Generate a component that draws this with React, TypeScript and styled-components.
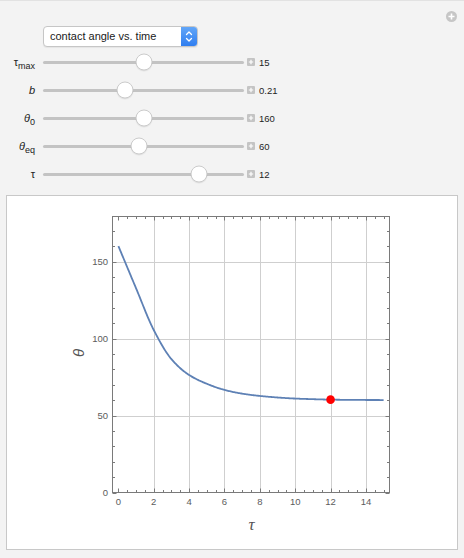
import React, { FC } from 'react';
import styled, { createGlobalStyle } from 'styled-components';

const GlobalStyle = createGlobalStyle`
  body {
    margin: 0;
    background: #f3f3f3;
    font-family: "Liberation Sans", Arial, sans-serif;
  }
`;

const Page = styled.div`
  position: relative;
  width: 464px;
  height: 558px;
  box-sizing: border-box;
  padding-top: 25px;
  background: #f3f3f3;
  border-top: 1px solid #e2e2e2;
  overflow: hidden;
`;

const CornerButton = styled.div`
  position: absolute;
  top: 10px;
  right: 7px;
  width: 11px;
  height: 11px;
  display: flex;
`;

const MenuRow = styled.div`
  padding-left: 43px;
  display: flex;
`;

const Popup = styled.div`
  display: flex;
  width: 155px;
  height: 21px;
  box-sizing: border-box;
  border: 1px solid #c6c6c6;
  border-radius: 4px;
  background: #fff;
  box-shadow: 0 1px 1px rgba(0, 0, 0, 0.06);
  overflow: hidden;
`;

const PopupText = styled.span`
  flex: 1;
  padding-left: 6px;
  font-size: 11px;
  line-height: 19px;
  color: #1a1a1a;
`;

const Stepper = styled.span`
  width: 16px;
  display: flex;
  align-items: center;
  justify-content: center;
  background: linear-gradient(#62a6f8, #2f7ef0);
`;

const Controls = styled.div`
  margin-top: 1px;
  display: flex;
  flex-direction: column;
`;

const Row = styled.div`
  display: flex;
  align-items: center;
  height: 28px;
`;

const Label = styled.div`
  width: 35px;
  text-align: right;
  font-size: 11px;
  color: #222;
  white-space: nowrap;
`;

const Sym = styled.span<{ $italic?: boolean }>`
  font-style: ${(p) => (p.$italic ? 'italic' : 'normal')};
`;

const Sub = styled.sub`
  font-size: 9px;
  vertical-align: -3px;
  line-height: 0;
`;

const Track = styled.div`
  position: relative;
  margin-left: 8px;
  width: 201px;
  height: 3px;
  border-radius: 2px;
  background: #c3c3c3;
`;

const Thumb = styled.div`
  position: absolute;
  top: 50%;
  width: 17px;
  height: 17px;
  box-sizing: border-box;
  border-radius: 50%;
  border: 1px solid #cbcbcb;
  background: #fff;
  box-shadow: 0 1px 1px rgba(0, 0, 0, 0.08);
  transform: translate(-50%, -50%);
`;

const PlusBox = styled.span`
  margin-left: 3px;
  width: 8px;
  height: 8px;
  display: flex;
`;

const Value = styled.span`
  margin-left: 4px;
  font-size: 9.5px;
  color: #1e1e1e;
`;

const Panel = styled.div`
  margin: 7px 0 0 6px;
  width: 452px;
  height: 355px;
  box-sizing: border-box;
  border: 1px solid #c8c8c8;
  background: #fff;
`;

const PlusSquare = () => (
  <svg width="8" height="8" viewBox="0 0 8 8">
    <rect width="8" height="8" rx="1" fill="#c4c4c4" />
    <path d="M4 1.8v4.4M1.8 4h4.4" stroke="#fff" strokeWidth="1.2" />
  </svg>
);

const Slider: FC<{
  label: React.ReactNode;
  value: string;
  fraction: number;
}> = ({ label, value, fraction }) => (
  <Row>
    <Label>{label}</Label>
    <Track>
      <Thumb style={{ left: 8.5 + fraction * 184 }} />
    </Track>
    <PlusBox>
      <PlusSquare />
    </PlusBox>
    <Value>{value}</Value>
  </Row>
);

// contact angle samples, interpolated with a monotone cubic
const samples: [number, number][] = [
  [0, 160], [1, 132.6], [2, 105.5], [3, 86.6], [4, 76.3], [5, 70.6],
  [6, 66.6], [7, 64.2], [8, 62.7], [9, 61.7], [10, 61.0], [11, 60.6],
  [12, 60.3], [13, 60.15], [14, 60.08], [15, 60.04],
];

const interp = (t: number) => {
  const n = samples.length;
  const d: number[] = [];
  for (let i = 0; i < n - 1; i++) d.push(samples[i + 1][1] - samples[i][1]);
  const m: number[] = samples.map((_, i) => {
    if (i === 0) return d[0];
    if (i === n - 1) return d[n - 2];
    if (d[i - 1] * d[i] <= 0) return 0;
    return (2 * d[i - 1] * d[i]) / (d[i - 1] + d[i]);
  });
  const i = Math.min(n - 2, Math.floor(t));
  const s = t - i;
  const y0 = samples[i][1];
  const y1 = samples[i + 1][1];
  const h00 = 2 * s ** 3 - 3 * s ** 2 + 1;
  const h10 = s ** 3 - 2 * s ** 2 + s;
  const h01 = -2 * s ** 3 + 3 * s ** 2;
  const h11 = s ** 3 - s ** 2;
  return h00 * y0 + h10 * m[i] + h01 * y1 + h11 * m[i + 1];
};

const left = 105.5;
const right = 382.5;
const top = 20.5;
const bottom = 296.5;
const X = (t: number) => left + (t + 1 / 3) * ((right - left) / (15 + 2 / 3));
const Y = (v: number) => bottom - v * 1.54;

const Plot = () => {
  const pts: string[] = [];
  for (let k = 0; k <= 300; k++) {
    const t = (15 * k) / 300;
    pts.push(`${X(t).toFixed(2)},${Y(interp(t)).toFixed(2)}`);
  }

  const xTicks: React.ReactNode[] = [];
  for (let k = 0; k <= 30; k++) {
    const t = k / 2;
    const major = k % 4 === 0;
    const len = major ? 4 : 2.5;
    const x = Math.round(X(t)) + 0.5;
    xTicks.push(
      <g key={`x${k}`}>
        <line x1={x} x2={x} y1={bottom} y2={bottom - len} />
        <line x1={x} x2={x} y1={top} y2={top + len} />
      </g>
    );
  }
  const yTicks: React.ReactNode[] = [];
  for (let v = 0; v <= 170; v += 10) {
    const major = v % 50 === 0;
    const len = major ? 4 : 2.5;
    const y = Math.round(Y(v)) + 0.5;
    yTicks.push(
      <g key={`y${v}`}>
        <line x1={left} x2={left + len} y1={y} y2={y} />
        <line x1={right} x2={right - len} y1={y} y2={y} />
      </g>
    );
  }

  return (
    <svg width="450" height="353" viewBox="0 0 450 353" style={{ display: 'block' }}>
      <g stroke="#cfcfcf" strokeWidth="1">
        {[2, 4, 6, 8, 10, 12, 14].map((t) => {
          const x = Math.round(X(t)) + 0.5;
          return <line key={t} x1={x} x2={x} y1={top} y2={bottom} />;
        })}
        {[50, 100, 150].map((v) => {
          const y = Math.round(Y(v)) + 0.5;
          return <line key={v} x1={left} x2={right} y1={y} y2={y} />;
        })}
      </g>
      <g stroke="#7a7a7a" strokeWidth="1">
        {xTicks}
        {yTicks}
      </g>
      <rect
        x={left}
        y={top}
        width={right - left}
        height={bottom - top}
        fill="none"
        stroke="#7a7a7a"
      />
      <polyline points={pts.join(' ')} fill="none" stroke="#5e81b5" strokeWidth="1.8" />
      <circle cx={X(12)} cy={Y(interp(12))} r="4.3" fill="#ff0000" />
      <g fill="#5c5c5c" fontSize="9.5" fontFamily="Liberation Sans, Arial, sans-serif">
        {[0, 2, 4, 6, 8, 10, 12, 14].map((t) => (
          <text key={t} x={X(t)} y={309} textAnchor="middle">
            {t}
          </text>
        ))}
        {[0, 50, 100, 150].map((v) => (
          <text key={v} x={101} y={Y(v) + 3.3} textAnchor="end">
            {v}
          </text>
        ))}
      </g>
      <text
        x={244.5}
        y={334}
        textAnchor="middle"
        fontSize="17"
        fontStyle="italic"
        fill="#555"
        fontFamily="Liberation Serif, serif"
      >
        τ
      </text>
      <text
        transform="translate(76.5 157) rotate(-90)"
        textAnchor="middle"
        fontSize="15"
        fontStyle="italic"
        fill="#555"
        fontFamily="Liberation Sans, Arial, sans-serif"
      >
        θ
      </text>
    </svg>
  );
};

const App = () => (
  <Page>
    <GlobalStyle />
    <CornerButton>
      <svg width="11" height="11" viewBox="0 0 11 11">
        <circle cx="5.5" cy="5.5" r="5.5" fill="#c6c6c6" />
        <path d="M5.5 2.5v6M2.5 5.5h6" stroke="#fff" strokeWidth="1.6" />
      </svg>
    </CornerButton>
    <MenuRow>
      <Popup>
        <PopupText>contact angle vs. time</PopupText>
        <Stepper>
          <svg width="8" height="13" viewBox="0 0 8 13">
            <path
              d="M1.5 4.5L4 2l2.5 2.5M1.5 8.5L4 11l2.5-2.5"
              fill="none"
              stroke="#fff"
              strokeWidth="1.3"
              strokeLinecap="round"
              strokeLinejoin="round"
            />
          </svg>
        </Stepper>
      </Popup>
    </MenuRow>
    <Controls>
      <Slider
        label={
          <>
            <Sym>τ</Sym>
            <Sub>max</Sub>
          </>
        }
        value="15"
        fraction={0.5}
      />
      <Slider label={<Sym $italic>b</Sym>} value="0.21" fraction={0.4} />
      <Slider
        label={
          <>
            <Sym $italic>θ</Sym>
            <Sub>0</Sub>
          </>
        }
        value="160"
        fraction={0.5}
      />
      <Slider
        label={
          <>
            <Sym $italic>θ</Sym>
            <Sub>eq</Sub>
          </>
        }
        value="60"
        fraction={0.476}
      />
      <Slider label={<Sym>τ</Sym>} value="12" fraction={0.8} />
    </Controls>
    <Panel>
      <Plot />
    </Panel>
  </Page>
);

export default App;
